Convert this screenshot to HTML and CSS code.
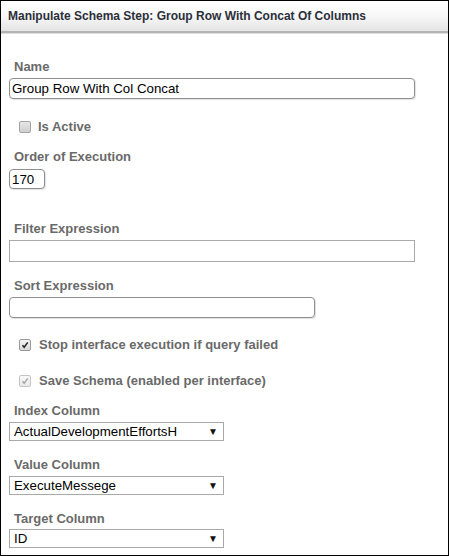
FILE: index.html
```html
<!DOCTYPE html>
<html>
<head>
<meta charset="utf-8">
<link rel="stylesheet" href="styles.css">
</head>
<body>
<div class="panel">
  <div class="header">Manipulate Schema Step: Group Row With Concat Of Columns</div>
  <div class="content">
    <label class="lbl lbl-name">Name</label>
    <div class="input rounded w-full h21">Group Row With Col Concat</div>

    <div class="check-row row-active">
      <span class="cb"></span>
      <span class="cb-label">Is Active</span>
    </div>

    <label class="lbl lbl-order">Order of Execution</label>
    <div class="input rounded w-small h20">170</div>

    <label class="lbl lbl-filter">Filter Expression</label>
    <div class="input square w-full h22"></div>

    <label class="lbl lbl-sort">Sort Expression</label>
    <div class="input rounded w-mid h21"></div>

    <div class="check-row row-stop">
      <span class="cb checked"><svg viewBox="0 0 12 12" width="12" height="12"><path d="M3 6.2 L5 8.6 L9.3 2.8" fill="none" stroke="#222" stroke-width="1.8"/></svg></span>
      <span class="cb-label">Stop interface execution if query failed</span>
    </div>

    <div class="check-row row-save">
      <span class="cb checked disabled"><svg viewBox="0 0 12 12" width="12" height="12"><path d="M3 6.2 L5 8.6 L9.3 2.8" fill="none" stroke="#a8a8a8" stroke-width="1.8"/></svg></span>
      <span class="cb-label">Save Schema (enabled per interface)</span>
    </div>

    <label class="lbl lbl-index">Index Column</label>
    <div class="select"><span class="sel-text">ActualDevelopmentEffortsH</span><span class="arrow">&#9660;</span></div>

    <label class="lbl lbl-value">Value Column</label>
    <div class="select"><span class="sel-text">ExecuteMessege</span><span class="arrow">&#9660;</span></div>

    <label class="lbl lbl-target">Target Column</label>
    <div class="select"><span class="sel-text">ID</span><span class="arrow">&#9660;</span></div>
  </div>
</div>
</body>
</html>
```

FILE: styles.css
```css
* { box-sizing: border-box; }
html, body { margin: 0; padding: 0; background: #fff; }
body { font-family: "Liberation Sans", Arial, sans-serif; }

.panel {
  width: 449px;
  height: 556px;
  border: 1px solid #000;
  overflow: hidden;
  background: #fff;
}

.header {
  height: 32px;
  padding: 8px 0 0 7px;
  font-size: 12px;
  font-weight: bold;
  color: #2b2f3a;
  background: linear-gradient(#ffffff 0%, #f7f7f7 50%, #e4e4e4 100%);
  border-bottom: 2px solid #b4b4b4;
  box-shadow: 0 1px 0 #dcdcdc;
}

.content {
  padding: 0 0 0 8px;
}

.lbl {
  display: block;
  font-size: 13px;
  line-height: 15px;
  font-weight: bold;
  color: #6a6a6a;
  padding-left: 5px;
  margin-bottom: 4px;
}
.lbl-name { margin-top: 26px; }
.lbl-order { margin-top: 15px; margin-bottom: 5px; }
.lbl-filter { margin-top: 32px; }
.lbl-sort { margin-top: 16px; }
.lbl-index { margin-top: 15px; }
.lbl-value { margin-top: 16px; }
.lbl-target { margin-top: 16px; margin-bottom: 3px; }

.input {
  font-size: 13.3px;
  color: #000;
  border: 1px solid #8f8f8f;
  padding: 0 0 0 2px;
  display: flex;
  align-items: center;
  background: #fff;
}
.rounded { border-radius: 4px; box-shadow: 1px 1px 1px rgba(0,0,0,0.12); }
.square { border-color: #a9a9a9; }
.w-full { width: 406px; }
.w-mid { width: 306px; }
.w-small { width: 36px; }
.h20 { height: 20px; }
.h21 { height: 21px; }
.h22 { height: 22px; }

.check-row {
  display: flex;
  align-items: center;
  height: 15px;
  padding-left: 10px;
}
.row-active { margin-top: 20px; }
.row-stop { margin-top: 19px; padding-left: 10px; }
.row-save { margin-top: 21px; padding-left: 10px; }

.cb {
  width: 12px;
  height: 12px;
  border: 1px solid #9a9a9a;
  border-radius: 2px;
  background: linear-gradient(#f4f4f4, #d8d8d8);
  display: flex;
  align-items: center;
  justify-content: center;
  flex: none;
}
.cb svg { display: block; width: 10px; height: 10px; }
.cb.disabled { border-color: #c4c4c4; background: linear-gradient(#fafafa, #e8e8e8); }
.row-active .cb { background: linear-gradient(#e6e6e6, #cfcfcf); border-color: #a4a4a4; }

.cb-label {
  font-size: 13px;
  font-weight: bold;
  color: #6a6a6a;
  margin-left: 7px;
  line-height: 15px;
}
.row-stop .cb-label, .row-save .cb-label { margin-left: 8px; }

.select {
  width: 215px;
  height: 19px;
  border: 1px solid #a9a9a9;
  display: flex;
  align-items: center;
  justify-content: space-between;
  font-size: 13.3px;
  color: #000;
  padding: 0 5px 0 4px;
}
.arrow {
  font-size: 10px;
  color: #111;
}
```
